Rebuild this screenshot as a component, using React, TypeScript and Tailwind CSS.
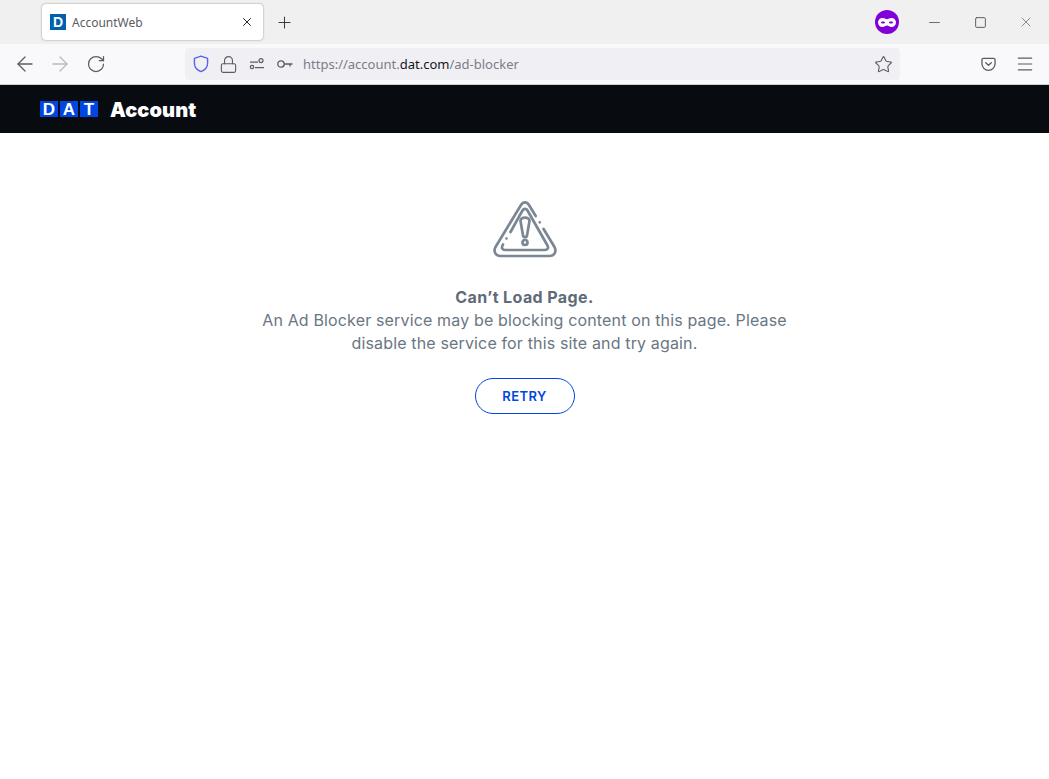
import { ArrowLeft, ArrowRight, Lock, Menu, Minus, Plus, RotateCw, Square, Star, X } from 'lucide-react'

function Tab() {
	return (
		<div className="flex items-center w-[221px] h-9 ml-[42px] mt-1 pl-2 pr-[9px] bg-white rounded shadow-[0_0_2px_rgba(0,0,0,0.45)]">
			<div className="flex items-center justify-center w-4 h-4 bg-[#0060b0] text-white text-[14px] font-bold leading-none font-['Liberation_Sans',sans-serif]">
				D
			</div>
			<span className="ml-1.5 mt-px text-xs text-[#5b5b66] font-['Noto_Sans',sans-serif]">AccountWeb</span>
			<X className="w-3.5 h-3.5 ml-auto text-[#15141a]" strokeWidth={1.6} />
		</div>
	)
}

function TitleBar() {
	return (
		<div className="flex items-start h-11 bg-[#f0f0f0]">
			<Tab />
			<Plus className="w-[19px] h-[19px] ml-[12px] mt-[13px] text-[#3a3a44]" strokeWidth={1.3} />
			<div className="flex items-center ml-auto h-11">
				<div className="flex items-center justify-center w-6 h-6 rounded-full bg-[#8000d7]">
					<svg width="18" height="9" viewBox="0 0 18 9">
						<path
							fillRule="evenodd"
							fill="#fff"
							d="M4.5 0C6.4 0 7.6 1.2 9 1.2S11.6 0 13.5 0C16 0 18 2 18 4.5S16 9 13.5 9C11.6 9 10.4 7.6 9 7.6S6.4 9 4.5 9C2 9 0 7 0 4.5S2 0 4.5 0ZM5 3.5C3.9 3.5 3 3.9 3 4.5S3.9 5.5 5 5.5 7 5.1 7 4.5 6.1 3.5 5 3.5ZM13 3.5C11.9 3.5 11 3.9 11 4.5S11.9 5.5 13 5.5 15 5.1 15 4.5 14.1 3.5 13 3.5Z"
						/>
					</svg>
				</div>
				<Minus className="w-[17px] h-[17px] ml-[26.5px] text-[#55555c]" strokeWidth={1.2} />
				<Square className="w-[13px] h-[13px] ml-[31px] text-[#55555c]" strokeWidth={1.7} />
				<X className="w-4 h-4 ml-[31.5px] mr-[15px] text-[#55555c]" strokeWidth={1} />
			</div>
		</div>
	)
}

function UrlBar() {
	return (
		<div className="flex items-center flex-1 h-8 ml-[79px] pl-2 pr-[7px] rounded bg-[#f0f0f4]">
			{/* Tracking shield */}
			<svg width="16" height="18" viewBox="0 0 16 18" fill="none">
				<path
					d="M8 1.2 14.6 3.4V8.2C14.6 12 12 15 8 16.6 4 15 1.4 12 1.4 8.2V3.4Z"
					stroke="#5a63e8"
					strokeWidth="1.4"
					strokeLinejoin="round"
				/>
			</svg>
			<Lock className="w-[19px] h-[19px] ml-[10px] text-[#5b5b66]" strokeWidth={1.4} />
			<svg className="ml-[11px]" width="16" height="12" viewBox="0 0 16 12" fill="none" stroke="#5b5b66" strokeWidth="1.2">
				<circle cx="12" cy="2.6" r="2" />
				<path d="M1 4.2H9M6 9.6H15" />
				<circle cx="3" cy="9" r="1.7" />
			</svg>
			<svg className="ml-[12px]" width="16" height="10" viewBox="0 0 16 10" fill="none" stroke="#5b5b66" strokeWidth="1.3">
				<circle cx="4" cy="5" r="3.2" />
				<path d="M7.2 5H15.5M13 5V7.5" />
			</svg>
			<span className="ml-[10px] mt-px text-[13px] text-[#7c7c86] font-['Noto_Sans',sans-serif]">
				https://account.<span className="text-[#15141a]">dat.com</span>/ad-blocker
			</span>
			<Star className="w-[19px] h-[19px] ml-auto text-[#5b5b66]" strokeWidth={1.4} />
		</div>
	)
}

function Toolbar() {
	return (
		<div className="flex items-center h-[41px] pl-[13px] bg-[#f9f9fb] border-b border-[#cfcfd8]">
			<ArrowLeft className="w-6 h-6 text-[#5b5b66]" strokeWidth={1.3} />
			<ArrowRight className="w-6 h-6 ml-[11px] text-[#b8b8bf]" strokeWidth={1.3} />
			<RotateCw className="w-5 h-5 ml-[14px] text-[#5b5b66]" strokeWidth={1.5} />
			<UrlBar />
			<svg className="ml-[81px]" width="15" height="15" viewBox="0 0 16 15" fill="none" stroke="#5b5b66" strokeWidth="1.4">
				<path d="M2.5 1H13.5C14.4 1 15 1.6 15 2.5V6.5C15 10.5 12 13.8 8 13.8S1 10.5 1 6.5V2.5C1 1.6 1.6 1 2.5 1Z" />
				<path d="M5 5.6 8 8.4 11 5.6" strokeLinecap="round" strokeLinejoin="round" />
			</svg>
			<Menu className="w-5 h-5 ml-[19px] mr-[14px] text-[#5b5b66]" strokeWidth={1.4} />
		</div>
	)
}

function SiteHeader() {
	return (
		<header className="flex items-center h-12 pl-10 bg-[#080c10]">
			<div className="flex gap-0.5 text-white text-[17px] font-bold leading-none font-['Liberation_Sans',sans-serif]">
				<span className="flex items-center justify-center w-[18px] h-4 bg-[#0046e0]">D</span>
				<span className="flex items-center justify-center w-[18px] h-4 bg-[#0046e0]">A</span>
				<span className="flex items-center justify-center w-[18px] h-4 bg-[#0046e0]">T</span>
			</div>
			<span className="ml-3 mt-0.5 text-white text-[20px] font-black tracking-[0.1px] font-['Inter',sans-serif]">Account</span>
		</header>
	)
}

function WarningIcon() {
	return (
		<svg width="66" height="60" viewBox="0 0 66 60" fill="none" stroke="#7b8794" strokeWidth="2.7" strokeLinecap="round" strokeLinejoin="round">
			{/* outer triangle, broken at the upper right */}
			<path d="M43.7 17 37 6C35 2.4 31 2.4 29 6L3.5 48C1 53 4 57 8.5 57H57.5C62 57 65 53 62.5 48L51.6 30" />
			{/* inner triangle, broken at the lower left */}
			<path d="M18.5 33 30.5 11.5C31.7 9.4 34.3 9.4 35.5 11.5L55.5 46.5C56.8 49 55.5 51 53 51H13C10.5 51 9.2 49 10.5 46.5L11 45.5" />
			<path d="M47.7 23.3V23.31M14.5 39.5V39.51" />
			{/* exclamation mark */}
			<path d="M28.5 22C28.5 17.5 37.5 17.5 37.5 22L35 36.5C34.7 38.7 31.3 38.7 31 36.5Z" />
			<circle cx="33" cy="43.5" r="2.5" />
		</svg>
	)
}

export default function App() {
	return (
		<div className="min-h-[779px] bg-white font-['Inter',sans-serif]">
			<TitleBar />
			<Toolbar />
			<SiteHeader />
			<main className="flex flex-col items-center pt-[66px]">
				<WarningIcon />
				<h1 className="mt-[26px] text-base leading-6 font-bold tracking-[0.4px] text-[#5f6b78]">Can’t Load Page.</h1>
				<p className="w-[540px] text-center text-base leading-[23px] tracking-[0.15px] text-[#6a7683]">
					An Ad Blocker service may be blocking content on this page. Please disable the service for this site and try again.
				</p>
				<button className="w-[100px] h-9 mt-[23px] pt-px rounded-full border border-[#0046e0] text-[#0046e0] text-[13px] font-semibold tracking-[0.4px]">
					RETRY
				</button>
			</main>
		</div>
	)
}
